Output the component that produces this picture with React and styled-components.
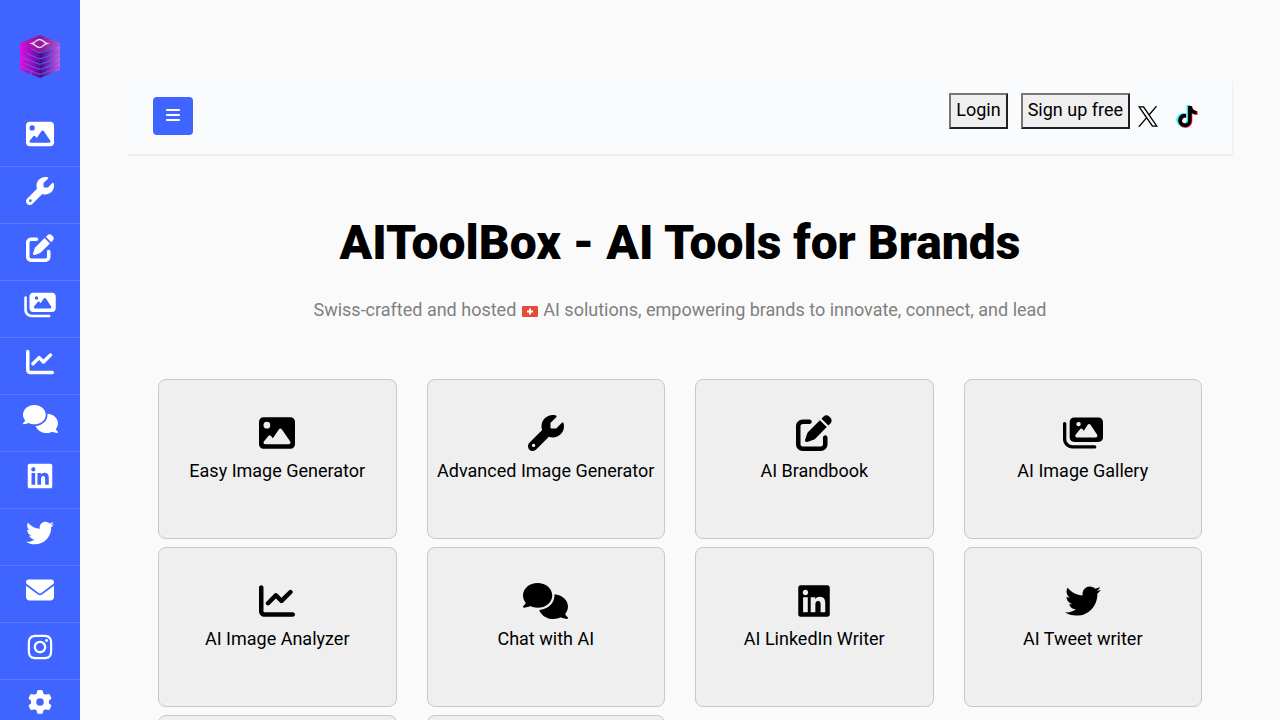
import React from 'react';
import styled, { createGlobalStyle } from 'styled-components';
import {
  FaImage, FaWrench, FaPenToSquare, FaImages, FaChartLine, FaComments,
  FaLinkedin, FaTwitter, FaEnvelope, FaInstagram, FaGear, FaBars, FaTiktok,
} from 'react-icons/fa6';

const GlobalStyle = createGlobalStyle`
  *, *::before, *::after { box-sizing: border-box; }
  html { scrollbar-width: none; }
  body {
    margin: 0;
    background: #fafafa;
    color: #000;
    font-family: Roboto, "Liberation Sans", sans-serif;
    font-size: 18px;
  }
  button { font: inherit; color: inherit; }
`;

const Page = styled.div`
  display: flex;
  align-items: flex-start;
  min-height: 100vh;
`;

const Sidebar = styled.aside`
  position: sticky;
  top: 0;
  flex: none;
  width: 80px;
  height: 100vh;
  overflow: hidden;
  background: #3f64ff;
`;

const Brand = styled.a`
  display: flex;
  justify-content: center;
  padding: 34px 0 32px;
`;

const NavLink = styled.a`
  display: flex;
  justify-content: center;
  padding: 10px 0 18px;
  border-bottom: 1px solid #567bff;
  color: #fff;

  svg {
    display: block;
    width: ${(p) => p.$width}px;
    height: ${(p) => p.$height}px;
  }
`;

const Main = styled.main`
  flex: 1;
  min-width: 0;
  padding: 80px 48px;
`;

const TopBar = styled.header`
  display: flex;
  justify-content: space-between;
  align-items: flex-start;
  height: 75px;
  padding: 13px 34px 0 25px;
  background: #f9fbfc;
  border-bottom: 1px solid #e6eaec;
  box-shadow: 1px 1px 1px #eef0f2;
`;

const MenuButton = styled.button`
  display: flex;
  align-items: center;
  justify-content: center;
  width: 40px;
  height: 38px;
  margin-top: 4px;
  padding: 0 0 2px;
  border: 0;
  border-radius: 4px;
  background: #3f64ff;
  color: #fff;
  font-size: 16px;
`;

const Actions = styled.div`
  display: flex;
  align-items: flex-start;
`;

const AuthButton = styled.button`
  height: 36px;
  margin-right: ${(p) => p.$gap};
  padding: 0 5px 2px;
  border: 2px solid;
  border-color: #767676 #212121 #212121 #767676;
  background: #efefef;
  line-height: 30px;
  white-space: nowrap;
`;

const SocialLink = styled.a`
  display: flex;
  align-items: center;
  justify-content: center;
  width: 22px;
  height: 24px;
  margin: 11px 0 0 ${(p) => p.$gap || '0'};
  color: #000;
`;

const Hero = styled.section`
  padding: 56px 0 54px;
  text-align: center;
`;

const Title = styled.h1`
  margin: 0;
  font-size: 48px;
  font-weight: 900;
  line-height: 64px;
`;

const Subtitle = styled.p`
  margin: 20px 0 0;
  color: #808080;
  line-height: 30px;
`;

const Flag = styled.svg`
  width: 18px;
  height: 12px;
  vertical-align: -2px;
`;

const CardGrid = styled.section`
  display: grid;
  grid-template-columns: repeat(4, 1fr);
  gap: 8px 30px;
  padding: 0 30px;
`;

const Card = styled.button`
  display: flex;
  flex-direction: column;
  align-items: center;
  height: 160px;
  padding: 35px 8px 0;
  border: 1px solid #c8c8c8;
  border-radius: 8px;
  background: #efefef;
  line-height: 28px;
  white-space: nowrap;

  svg {
    display: block;
    width: ${(p) => p.$width}px;
    height: 36px;
    margin-bottom: 6px;
  }
`;

const tools = [
  { Icon: FaImage, label: 'Easy Image Generator' },
  { Icon: FaWrench, label: 'Advanced Image Generator' },
  { Icon: FaPenToSquare, label: 'AI Brandbook' },
  { Icon: FaImages, label: 'AI Image Gallery', navWidth: 32, cardWidth: 40 },
  { Icon: FaChartLine, label: 'AI Image Analyzer' },
  { Icon: FaComments, label: 'Chat with AI', navWidth: 35, cardWidth: 45 },
  { Icon: FaLinkedin, label: 'AI LinkedIn Writer' },
  { Icon: FaTwitter, label: 'AI Tweet writer' },
  { Icon: FaEnvelope, label: 'AI Email Writer' },
  { Icon: FaInstagram, label: 'AI Instagram Writer' },
];

const navItems = [
  ...tools,
  { Icon: FaGear, label: 'Settings', navWidth: 24, navHeight: 24 },
];

function CubeLogo() {
  return (
    <svg width="42" height="44" viewBox="0 0 42 44" aria-hidden="true">
      <defs>
        <linearGradient id="cubeTop" x1="0" x2="1">
          <stop offset="0" stopColor="#d00fd0" />
          <stop offset=".5" stopColor="#8a1690" />
          <stop offset="1" stopColor="#b05ac8" />
        </linearGradient>
        <linearGradient id="cubeLeft" x1="0" x2="1">
          <stop offset="0" stopColor="#e010e0" />
          <stop offset=".55" stopColor="#a00cbe" />
          <stop offset="1" stopColor="#5a0a90" />
        </linearGradient>
        <linearGradient id="cubeRight" x1="0" x2="1">
          <stop offset="0" stopColor="#3c0a8a" />
          <stop offset="1" stopColor="#d05ce6" />
        </linearGradient>
      </defs>
      <path d="M21 1 41 9 41 11 21 20 1 11 1 9Z" fill="url(#cubeTop)" />
      <path d="M1 10 21 18V44L1 36Z" fill="url(#cubeLeft)" />
      <path d="M41 10 21 18V44L41 36Z" fill="url(#cubeRight)" />
      <g fill="none" stroke="#5b63f5" strokeWidth="1">
        <path d="M12 14.500 18 18q3 1.500 6 0L41 11" />
        <path d="M8 19.500 18 24q3 1.500 6 0L41 17" />
        <path d="M3 23 18 29.500q3 1.500 6 0L41 22.500" />
        <path d="M6 29.500 18 34.500q3 1.500 6 0L41 28" />
        <path d="M3 33 18 39.500q3 1.500 6 0L41 33" />
        <path d="M12 37v4" />
      </g>
      <path d="M13 9.500c4-1 4-4 7.500-4s4 3 7.500 4c-4 1-4 4-7.500 4s-4-3-7.500-4Z" fill="#8e1f98" stroke="#f3c8ff" strokeWidth="1.400" />
    </svg>
  );
}

function XLogo() {
  return (
    <svg width="20" height="21" viewBox="0 0 1200 1227" fill="currentColor" aria-hidden="true">
      <path d="M714.163 519.284L1160.89 0H1055.03L667.137 450.887L357.328 0H0L468.492 681.821L0 1226.37H105.866L515.491 750.218L842.672 1226.37H1200L714.137 519.284H714.163ZM569.165 687.828L521.697 619.934L144.011 79.6944H306.615L611.412 515.685L658.88 583.579L1055.08 1150.3H892.476L569.165 687.854V687.828Z" />
    </svg>
  );
}

function TikTokLogo() {
  return (
    <svg width="22" height="24" viewBox="0 0 22 24" aria-hidden="true">
      <FaTiktok x="-1" y="1" size={22} color="#25f4ee" />
      <FaTiktok x="1" y="2" size={22} color="#fe2c55" />
      <FaTiktok x="1" y="2" size={21} color="#000" />
    </svg>
  );
}

export default function App() {
  return (
    <>
      <GlobalStyle />
      <Page>
        <Sidebar>
          <Brand href="#" aria-label="AIToolBox"><CubeLogo /></Brand>
          <nav>
            {navItems.map(({ Icon, label, navWidth = 28, navHeight = 28 }) => (
              <NavLink key={label} href="#" aria-label={label} $width={navWidth} $height={navHeight}>
                <Icon />
              </NavLink>
            ))}
          </nav>
        </Sidebar>
        <Main>
          <TopBar>
            <MenuButton type="button" aria-label="Toggle menu"><FaBars /></MenuButton>
            <Actions>
              <AuthButton type="button" $gap="13px">Login</AuthButton>
              <AuthButton type="button" $gap="7px">Sign up free</AuthButton>
              <SocialLink href="#" aria-label="X"><XLogo /></SocialLink>
              <SocialLink href="#" aria-label="TikTok" $gap="17px"><TikTokLogo /></SocialLink>
            </Actions>
          </TopBar>
          <Hero>
            <Title>AIToolBox - AI Tools for Brands</Title>
            <Subtitle>
              Swiss-crafted and hosted{' '}
              <Flag viewBox="0 0 18 12" role="img" aria-label="Swiss flag">
                <rect x="1" width="16" height="11" rx="1" fill="#e64a38" />
                <path d="M8 2.5h2v2h2v2h-2v2H8v-2H6v-2h2z" fill="#fff" />
              </Flag>{' '}
              AI solutions, empowering brands to innovate, connect, and lead
            </Subtitle>
          </Hero>
          <CardGrid>
            {tools.map(({ Icon, label, cardWidth = 36 }) => (
              <Card key={label} type="button" $width={cardWidth}>
                <Icon />
                {label}
              </Card>
            ))}
          </CardGrid>
        </Main>
      </Page>
    </>
  );
}
